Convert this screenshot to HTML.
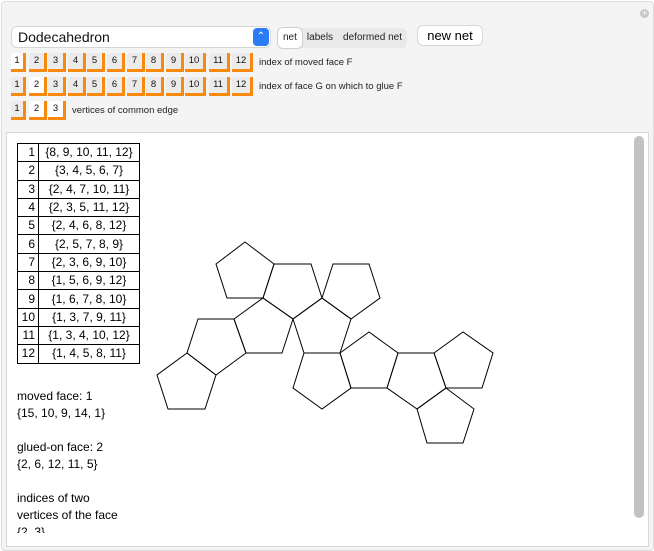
<!DOCTYPE html>
<html><head><style>
body{margin:0;width:654px;height:551px;background:#fff;font-family:"Liberation Sans",sans-serif;overflow:hidden;position:relative}
.panel{position:absolute;left:1px;top:1px;width:651px;height:548px;background:#f4f4f4;border:1px solid #ddd;border-radius:4px}
.abs{position:absolute}
.sel{left:12px;top:27px;width:258px;height:20px;background:#fff;border-radius:5px;box-shadow:0 0 0 1px #d6d6d6;font-size:14px;line-height:20px;padding-left:6px;box-sizing:border-box;color:#111}
.selbtn{right:1px;top:1px;width:16px;height:18px;background:#2b7bf6;border-radius:4px;color:#fff;font-size:10px;text-align:center;line-height:18px}
.seg{left:278px;top:28px;height:20px;background:#e9e9e9;border-radius:6px;font-size:10px;line-height:20px;color:#222}
.seg span{display:inline-block;padding:0 5px}
.seg .on{background:#fff;border-radius:5px;box-shadow:0 0 0 1px #d0d0d0}
.nn{left:418px;top:26px;width:64px;height:19px;background:#fff;border-radius:5px;box-shadow:0 0 0 1px #d8d8d8;font-size:13px;text-align:center;line-height:19px}
.b{position:absolute;height:16px;background:#ebebeb;border-right:3px solid #f7890f;border-bottom:3px solid #f7890f;box-sizing:content-box;font-size:9.5px;text-align:center;line-height:16px;color:#111;border-radius:3px 0 0 0}
.b.w{background:#fff}
.lab{font-size:9.5px;color:#222}
.content{left:6px;top:132px;width:641px;height:413px;background:#fff;border:1px solid #d8d8d8}
table{position:absolute;left:17px;top:143px;border-collapse:collapse;font-size:12px}
td{border:1px solid #000;height:17.3px;padding:0 3px;line-height:17px}
td:first-child{text-align:right;padding:0 3px 0 2px;width:15px}
td:last-child{text-align:center;width:100px;padding:0}
.txt{left:17px;top:388px;font-size:12px;line-height:17px;color:#000}
.sb{left:634px;top:136px;width:10px;height:382px;background:#c2c2c2;border-radius:5px}
</style></head><body>
<div class="panel"></div>
<div class="abs" style="left:640px;top:9px;width:9px;height:9px;border-radius:50%;background:#c8c8c8;color:#fff;font-size:9px;line-height:9px;text-align:center">+</div>
<div class="abs sel">Dodecahedron<div class="abs selbtn">⌃</div></div>
<div class="abs seg"><span class="on">net</span><span>labels</span><span>deformed net</span></div>
<div class="abs nn">new net</div>
<div class="b w" style="left:11px;top:53px;width:12px">1</div>
<div class="b" style="left:29px;top:53px;width:15px">2</div>
<div class="b" style="left:48px;top:53px;width:15px">3</div>
<div class="b" style="left:68px;top:53px;width:15px">4</div>
<div class="b" style="left:87px;top:53px;width:15px">5</div>
<div class="b" style="left:107px;top:53px;width:15px">6</div>
<div class="b" style="left:127px;top:53px;width:15px">7</div>
<div class="b" style="left:146px;top:53px;width:15px">8</div>
<div class="b" style="left:166px;top:53px;width:15px">9</div>
<div class="b" style="left:185px;top:53px;width:18px">10</div>
<div class="b" style="left:209px;top:53px;width:18px">11</div>
<div class="b" style="left:232px;top:53px;width:18px">12</div>
<div class="abs lab" style="left:259px;top:57px">index of moved face F</div>
<div class="b" style="left:11px;top:77px;width:12px">1</div>
<div class="b w" style="left:29px;top:77px;width:15px">2</div>
<div class="b" style="left:48px;top:77px;width:15px">3</div>
<div class="b" style="left:68px;top:77px;width:15px">4</div>
<div class="b" style="left:87px;top:77px;width:15px">5</div>
<div class="b" style="left:107px;top:77px;width:15px">6</div>
<div class="b" style="left:127px;top:77px;width:15px">7</div>
<div class="b" style="left:146px;top:77px;width:15px">8</div>
<div class="b" style="left:166px;top:77px;width:15px">9</div>
<div class="b" style="left:185px;top:77px;width:18px">10</div>
<div class="b" style="left:209px;top:77px;width:18px">11</div>
<div class="b" style="left:232px;top:77px;width:18px">12</div>
<div class="abs lab" style="left:259px;top:81px">index of face G on which to glue F</div>
<div class="b" style="left:11px;top:101px;width:12px">1</div>
<div class="b w" style="left:29px;top:101px;width:15px">2</div>
<div class="b w" style="left:48px;top:101px;width:15px">3</div>
<div class="abs lab" style="left:72px;top:105px">vertices of common edge</div>
<div class="abs content"></div>
<table>
<tr><td>1</td><td>{8, 9, 10, 11, 12}</td></tr>
<tr><td>2</td><td>{3, 4, 5, 6, 7}</td></tr>
<tr><td>3</td><td>{2, 4, 7, 10, 11}</td></tr>
<tr><td>4</td><td>{2, 3, 5, 11, 12}</td></tr>
<tr><td>5</td><td>{2, 4, 6, 8, 12}</td></tr>
<tr><td>6</td><td>{2, 5, 7, 8, 9}</td></tr>
<tr><td>7</td><td>{2, 3, 6, 9, 10}</td></tr>
<tr><td>8</td><td>{1, 5, 6, 9, 12}</td></tr>
<tr><td>9</td><td>{1, 6, 7, 8, 10}</td></tr>
<tr><td>10</td><td>{1, 3, 7, 9, 11}</td></tr>
<tr><td>11</td><td>{1, 3, 4, 10, 12}</td></tr>
<tr><td>12</td><td>{1, 4, 5, 8, 11}</td></tr>
</table>
<svg class="abs" style="left:0;top:0" width="654" height="551" fill="none" stroke="#000" stroke-width="1">
<polygon points="245,242 274,264 263,298 227,298 216,264"/>
<polygon points="274,264 311,264 322,298 293,319 263,298"/>
<polygon points="333,264 369,264 380,298 351,319 322,298"/>
<polygon points="293,319 322,298 351,319 340,353 304,353"/>
<polygon points="263,298 293,319 282,353 246,353 234,319"/>
<polygon points="198,319 234,319 246,353 216,375 187,353"/>
<polygon points="187,353 216,375 205,409 168,409 157,375"/>
<polygon points="304,353 340,353 351,388 322,409 293,388"/>
<polygon points="340,353 369,332 398,353 387,388 351,388"/>
<polygon points="398,353 434,353 446,388 417,409 387,388"/>
<polygon points="434,353 463,332 493,353 482,388 446,388"/>
<polygon points="446,388 474,409 463,443 427,443 417,409"/>
</svg>
<div class="abs txt">moved face: 1<br>{15, 10, 9, 14, 1}<br><br>glued-on face: 2<br>{2, 6, 12, 11, 5}<br><br>indices of two<br>vertices of the face<br>{2, 3}</div>
<div class="abs" style="left:7px;top:533px;width:626px;height:12px;background:#fff"></div>
<div class="abs sb"></div>
</body></html>
